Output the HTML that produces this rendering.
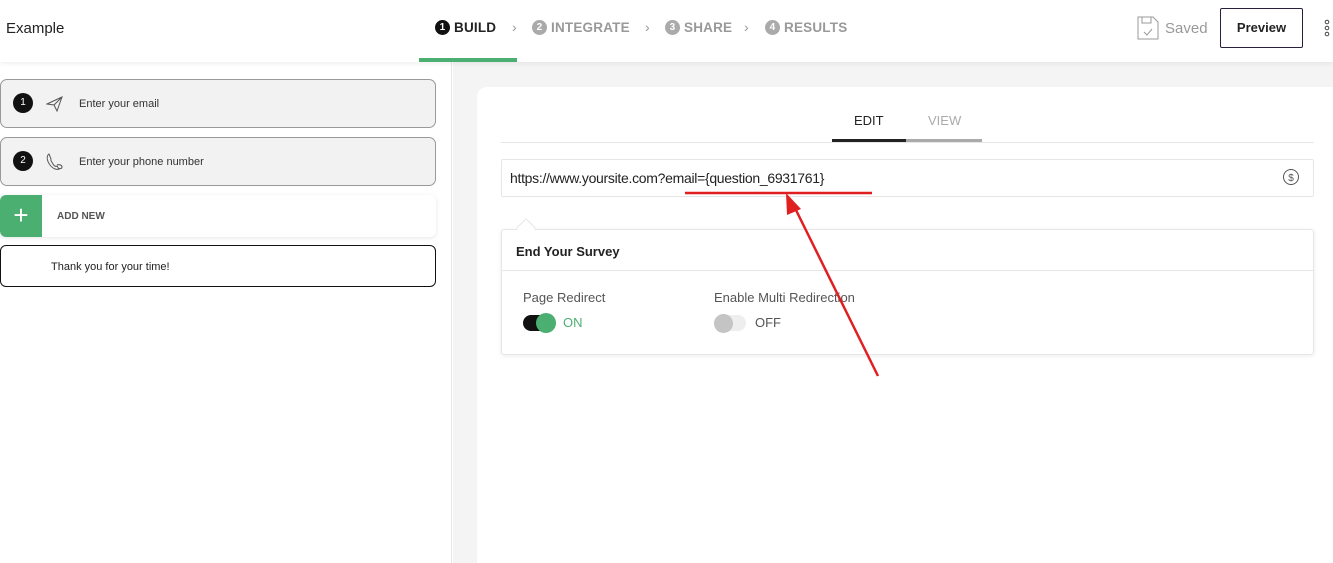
<!DOCTYPE html>
<html><head><meta charset="utf-8"><style>
*{box-sizing:border-box;margin:0;padding:0}
body{width:1333px;height:563px;overflow:hidden;background:#fff;font-family:"Liberation Sans",sans-serif;position:relative;color:#222}
.hdr{position:absolute;left:0;top:0;width:1333px;height:62px;background:#fff;box-shadow:0 2px 4px rgba(0,0,0,.06);z-index:2}
.abs{position:absolute}
.step{position:absolute;top:20px;font-size:13.5px;font-weight:bold;color:#999;letter-spacing:.2px;display:flex;align-items:center}
.num{display:inline-block;width:15px;height:15px;border-radius:50%;background:#aaa;color:#fff;font-size:10px;text-align:center;line-height:15px;margin-right:4px}
.chev{position:absolute;top:19px;color:#999;font-size:14px}
.left{position:absolute;left:0;top:62px;width:452px;height:501px;background:#fff;border-right:1px solid #e6e6e6}
.right{position:absolute;left:453px;top:62px;width:880px;height:501px;background:#f4f4f4}
.q{position:absolute;left:0;width:436px;height:49px;background:#f2f2f2;border:1px solid #999;border-radius:7px;font-size:11px;color:#333}
.q .n{position:absolute;left:12px;top:13px;width:20px;height:20px;border-radius:50%;background:#111;color:#fff;font-size:10px;text-align:center;line-height:20px}
.q .t{position:absolute;left:78px;top:18px}
.card{position:absolute;left:477px;top:87px;width:856px;height:476px;background:#fff;border-radius:10px 0 0 0}
</style></head><body>
<div class="hdr">
<div class="abs" style="left:6px;top:20px;font-size:15px;color:#222">Example</div>
<div class="step" style="left:435px;color:#222"><span class="num" style="background:#111">1</span>BUILD</div>
<div class="chev" style="left:512px">›</div>
<div class="step" style="left:532px"><span class="num">2</span>INTEGRATE</div>
<div class="chev" style="left:645px">›</div>
<div class="step" style="left:665px"><span class="num">3</span>SHARE</div>
<div class="chev" style="left:744px">›</div>
<div class="step" style="left:765px"><span class="num">4</span>RESULTS</div>
<div class="abs" style="left:419px;top:58px;width:98px;height:4px;background:#4caf72"></div>
<svg class="abs" style="left:1137px;top:16px" width="22" height="24" viewBox="0 0 22 24"><path d="M1 1h15l5 5v17H1z" fill="none" stroke="#999"/><rect x="5" y="1" width="9" height="6" fill="none" stroke="#999"/><path d="M7 16l3 3 5-6" fill="none" stroke="#999"/></svg>
<div class="abs" style="left:1165px;top:20px;font-size:15px;color:#999">Saved</div>
<div class="abs" style="left:1220px;top:8px;width:83px;height:40px;border:1px solid #2a1f3a;border-radius:2px;font-size:13px;font-weight:bold;text-align:center;line-height:38px">Preview</div>
<svg class="abs" style="left:1323px;top:19px" width="8" height="18"><circle cx="4" cy="3" r="1.8" fill="none" stroke="#444"/><circle cx="4" cy="9" r="1.8" fill="none" stroke="#444"/><circle cx="4" cy="15" r="1.8" fill="none" stroke="#444"/></svg>
</div>
<div class="left">
<div class="q" style="top:17px"><span class="n">1</span>
<svg class="abs" style="left:45px;top:15px" width="18" height="18" viewBox="0 0 18 18"><path d="M1 9L16 2 11 16 8 10z M8 10L16 2" fill="none" stroke="#555" stroke-width="1"/></svg>
<span class="t">Enter your email</span></div>
<div class="q" style="top:75px"><span class="n">2</span>
<svg class="abs" style="left:45px;top:14px" width="18" height="20" viewBox="0 0 18 20"><path d="M3 2c-3 2-2 7 1 11s7 5 9 4l-2-3c-1 1-3 0-4-2s-3-4-2-5z M11 13c2-1 5 0 5 2s-3 2-4 1" fill="none" stroke="#555"/></svg>
<span class="t">Enter your phone number</span></div>
<div class="abs" style="left:0;top:133px;width:436px;height:42px;background:#fff;border-radius:6px;box-shadow:0 1px 4px rgba(0,0,0,.1)">
<div class="abs" style="left:0;top:0;width:42px;height:42px;background:#4caf72;border-radius:6px 0 0 6px;color:#fff;font-size:26px;text-align:center;line-height:40px">+</div>
<div class="abs" style="left:57px;top:16px;font-size:10px;font-weight:bold;color:#555">ADD NEW</div></div>
<div class="abs" style="left:0;top:183px;width:436px;height:42px;border:1px solid #111;border-radius:6px;font-size:11px;padding:15px 0 0 50px">Thank you for your time!</div>
</div>
<div class="right"></div>
<div class="card">
<div class="abs" style="left:24px;top:55px;width:813px;height:1px;background:#e6e6e6"></div>
<div class="abs" style="left:377px;top:26px;font-size:13px;color:#222">EDIT</div>
<div class="abs" style="left:451px;top:26px;font-size:13px;color:#aaa">VIEW</div>
<div class="abs" style="left:355px;top:52px;width:74px;height:3px;background:#222"></div>
<div class="abs" style="left:429px;top:52px;width:76px;height:3px;background:#aaa"></div>
<div class="abs" style="left:24px;top:72px;width:813px;height:38px;border:1px solid #e6e6e6;border-radius:2px;font-size:14px;color:#222;padding:10px 0 0 8px;letter-spacing:-.3px">https://www.yoursite.com?email={question_6931761}</div>
<svg class="abs" style="left:805px;top:81px" width="18" height="18" viewBox="0 0 18 18"><circle cx="9" cy="9" r="7.5" fill="none" stroke="#555"/><text x="9" y="13" font-size="10" text-anchor="middle" fill="#555" font-family="Liberation Sans">$</text></svg>
<div class="abs" style="left:24px;top:142px;width:813px;height:126px;border:1px solid #e6e6e6;border-radius:3px;box-shadow:0 1px 4px rgba(0,0,0,.08)">
<div class="abs" style="left:14px;top:14px;font-size:13px;font-weight:bold;color:#222">End Your Survey</div>
<div class="abs" style="left:0;top:40px;width:811px;height:1px;background:#e6e6e6"></div>
<div class="abs" style="left:21px;top:60px;font-size:13px;color:#555">Page Redirect</div>
<div class="abs" style="left:21px;top:85px;width:32px;height:16px;border-radius:8px;background:#111"></div>
<div class="abs" style="left:34px;top:83px;width:20px;height:20px;border-radius:50%;background:#4caf72"></div>
<div class="abs" style="left:61px;top:85px;font-size:13px;color:#4caf72">ON</div>
<div class="abs" style="left:212px;top:60px;font-size:13px;color:#555">Enable Multi Redirection</div>
<div class="abs" style="left:212px;top:85px;width:32px;height:16px;border-radius:8px;background:#eee"></div>
<div class="abs" style="left:212px;top:84px;width:19px;height:19px;border-radius:50%;background:#c4c4c4"></div>
<div class="abs" style="left:253px;top:85px;font-size:13px;color:#555">OFF</div>
</div>
<div class="abs" style="left:42px;top:134px;width:14px;height:14px;background:#fff;border-left:1px solid #e6e6e6;border-top:1px solid #e6e6e6;transform:rotate(45deg)"></div>
</div>
<svg class="abs" style="left:0;top:0" width="1333" height="563"><path d="M685 193L872 193" stroke="#e02020" stroke-width="2.5"/><path d="M878 376L793 204" stroke="#e02020" stroke-width="2.5"/><path d="M786 193L787 215 801 209z" fill="#e02020"/></svg>
</body></html>
